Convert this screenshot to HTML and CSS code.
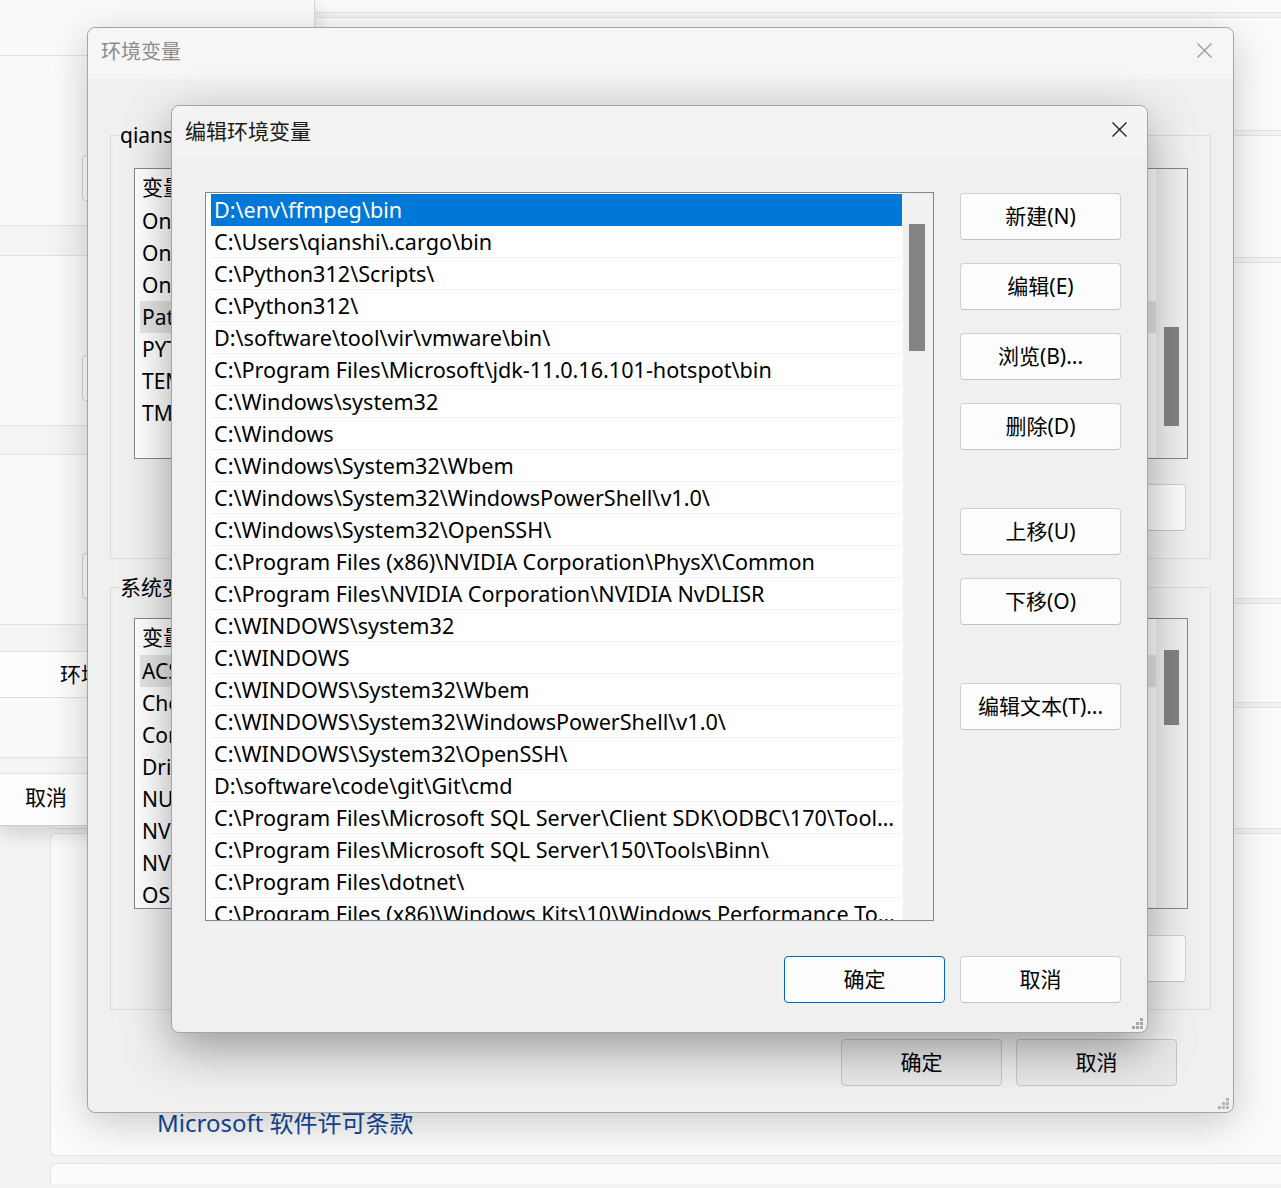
FILE: index.html
```html
<!DOCTYPE html>
<html lang="zh-CN">
<head>
    <meta charset="UTF-8">
    <title>编辑环境变量</title>
    <link rel="stylesheet" href="styles.css">
</head>
<body>
    <!-- settings page in the back -->
    <div class="settings">
        <div class="card c0"></div>
        <div class="card c1"></div>
        <div class="card c2"></div>
        <div class="card c3"></div>
        <div class="card c4"></div>
        <div class="card c5"></div>
        <div class="card c6"><a class="license" href="#">Microsoft 软件许可条款</a></div>
        <div class="card c7"></div>
    </div>

    <!-- system properties dialog -->
    <div class="sysprop">
        <div class="sp-row sp-top"></div>
        <div class="sp-row sp-block"><div class="sp-btn"></div></div>
        <div class="sp-row sp-strip"></div>
        <div class="sp-row sp-block"><div class="sp-btn"></div></div>
        <div class="sp-row sp-strip"></div>
        <div class="sp-row sp-block sp-block-b"><div class="sp-btn"></div></div>
        <div class="sp-row sp-strip2"></div>
        <div class="sp-row sp-env">环境变量(N)...</div>
        <div class="sp-row sp-gap"></div>
        <div class="sp-row sp-strip3"></div>
        <div class="sp-row sp-cancel">取消</div>
    </div>

    <!-- environment variables dialog (inactive) -->
    <div class="window outer">
        <div class="titlebar">
            <span>环境变量</span>
            <svg class="close" width="15" height="15" viewBox="0 0 15 15"><path d="M0.5 0.5L14.5 14.5M14.5 0.5L0.5 14.5" stroke="#9a9a9a" stroke-width="1.3" fill="none"/></svg>
        </div>
        <div class="outer-body">
            <fieldset class="group">
                <legend>qianshi 的用户变量(U)</legend>
                <div class="group-inner first">
                    <div class="listview">
                        <div class="lv-main">
                            <div class="lv-head">变量</div>
                            <div class="lv-row">OneDrive</div>
                            <div class="lv-row">OneDriveCommercial</div>
                            <div class="lv-row">OneDriveConsumer</div>
                            <div class="lv-row selected">Path</div>
                            <div class="lv-row">PYTHONPATH</div>
                            <div class="lv-row">TEMP</div>
                            <div class="lv-row">TMP</div>
                        </div>
                        <div class="vscroll"><div class="thumb t-user"></div></div>
                    </div>
                    <div class="btn-row">
                        <button class="btn">删除(D)</button>
                    </div>
                </div>
            </fieldset>

            <fieldset class="group second">
                <legend>系统变量(S)</legend>
                <div class="group-inner">
                    <div class="listview">
                        <div class="lv-main">
                            <div class="lv-head">变量</div>
                            <div class="lv-row selected">ACSvcPort</div>
                            <div class="lv-row">ChocolateyInstall</div>
                            <div class="lv-row">ComSpec</div>
                            <div class="lv-row">DriverData</div>
                            <div class="lv-row">NUMBER_OF_PROCESSORS</div>
                            <div class="lv-row">NVIDIA_APPS</div>
                            <div class="lv-row">NVTOOLSEXT_PATH</div>
                            <div class="lv-row">OS</div>
                        </div>
                        <div class="vscroll"><div class="thumb t-sys"></div></div>
                    </div>
                    <div class="btn-row">
                        <button class="btn">删除(L)</button>
                    </div>
                </div>
            </fieldset>

            <div class="btn-row footer">
                <button class="btn">确定</button>
                <button class="btn">取消</button>
            </div>
        </div>
        <svg class="grip grip-outer" width="12" height="12" viewBox="0 0 12 12"><g fill="#b4b4b4"><rect x="9" y="0" width="3" height="3"/><rect x="5" y="4" width="3" height="3"/><rect x="9" y="4" width="3" height="3"/><rect x="1" y="8" width="3" height="3"/><rect x="5" y="8" width="3" height="3"/><rect x="9" y="8" width="3" height="3"/></g></svg>
    </div>

    <!-- edit path dialog (active) -->
    <div class="window inner">
        <div class="titlebar">
            <span>编辑环境变量</span>
            <svg class="close" width="15" height="15" viewBox="0 0 15 15"><path d="M0.5 0.5L14.5 14.5M14.5 0.5L0.5 14.5" stroke="#1a1a1a" stroke-width="1.3" fill="none"/></svg>
        </div>
        <div class="inner-body">
            <div class="edit-area">
                <div class="listbox">
                    <div class="items">
                        <div class="item selected">D:\env\ffmpeg\bin</div>
                        <div class="item">C:\Users\qianshi\.cargo\bin</div>
                        <div class="item">C:\Python312\Scripts\</div>
                        <div class="item">C:\Python312\</div>
                        <div class="item">D:\software\tool\vir\vmware\bin\</div>
                        <div class="item">C:\Program Files\Microsoft\jdk-11.0.16.101-hotspot\bin</div>
                        <div class="item">C:\Windows\system32</div>
                        <div class="item">C:\Windows</div>
                        <div class="item">C:\Windows\System32\Wbem</div>
                        <div class="item">C:\Windows\System32\WindowsPowerShell\v1.0\</div>
                        <div class="item">C:\Windows\System32\OpenSSH\</div>
                        <div class="item">C:\Program Files (x86)\NVIDIA Corporation\PhysX\Common</div>
                        <div class="item">C:\Program Files\NVIDIA Corporation\NVIDIA NvDLISR</div>
                        <div class="item">C:\WINDOWS\system32</div>
                        <div class="item">C:\WINDOWS</div>
                        <div class="item">C:\WINDOWS\System32\Wbem</div>
                        <div class="item">C:\WINDOWS\System32\WindowsPowerShell\v1.0\</div>
                        <div class="item">C:\WINDOWS\System32\OpenSSH\</div>
                        <div class="item">D:\software\code\git\Git\cmd</div>
                        <div class="item">C:\Program Files\Microsoft SQL Server\Client SDK\ODBC\170\Tools\Binn\</div>
                        <div class="item">C:\Program Files\Microsoft SQL Server\150\Tools\Binn\</div>
                        <div class="item">C:\Program Files\dotnet\</div>
                        <div class="item">C:\Program Files (x86)\Windows Kits\10\Windows Performance Toolkit\</div>
                    </div>
                    <div class="vscroll list-scroll"><div class="thumb t-path"></div></div>
                </div>
                <div class="side-buttons">
                    <button class="btn">新建(N)</button>
                    <button class="btn">编辑(E)</button>
                    <button class="btn">浏览(B)...</button>
                    <button class="btn">删除(D)</button>
                    <button class="btn spaced">上移(U)</button>
                    <button class="btn">下移(O)</button>
                    <button class="btn spaced">编辑文本(T)...</button>
                </div>
            </div>
            <div class="btn-row inner-footer">
                <button class="btn default">确定</button>
                <button class="btn">取消</button>
            </div>
        </div>
        <svg class="grip grip-inner" width="12" height="12" viewBox="0 0 12 12"><g fill="#a6a6a6"><rect x="9" y="0" width="3" height="3"/><rect x="5" y="4" width="3" height="3"/><rect x="9" y="4" width="3" height="3"/><rect x="1" y="8" width="3" height="3"/><rect x="5" y="8" width="3" height="3"/><rect x="9" y="8" width="3" height="3"/></g></svg>
    </div>
</body>
</html>
```

FILE: styles.css
```css
* {
    box-sizing: border-box;
}
body {
    margin: 0;
    width: 1281px;
    height: 1188px;
    position: relative;
    overflow: hidden;
    background-color: #f3f3f3;
    font-family: "Noto Sans", "Noto Sans CJK SC", sans-serif;
    color: #000;
}

/* settings page */
.settings {
    position: absolute;
    left: 50px;
    top: 0;
    width: 1231px;
    display: flex;
    flex-direction: column;
    gap: 4px;
}
.card {
    background-color: #fbfbfb;
    border: 1px solid #e3e3e3;
    border-right: none;
    border-radius: 6px 0 0 6px;
}
.c0 { height: 13px; border-top: none; border-radius: 0 0 0 6px; }
.c1 { height: 114px; }
.c2 { height: 123px; }
.c3 { height: 337px; }
.c4 { height: 100px; }
.c5 { height: 122px; }
.c6 { height: 323px; padding: 273px 0 0 106px; }
.c7 { height: 21px; margin-top: 3px; border-bottom: none; border-radius: 6px 0 0 0; }
.license {
    font-size: 24px;
    line-height: 32px;
    color: #12479a;
    text-decoration: none;
}

/* system properties */
.sysprop {
    position: absolute;
    left: 0;
    top: 0;
    width: 315px;
    background-color: #fafafa;
    border-right: 1px solid #d6d6d6;
    border-bottom: 1px solid #cfcfcf;
    box-shadow: 0 6px 20px rgba(0,0,0,0.16);
    font-size: 21px;
}
.sp-row {
    border-bottom: 1px solid #e0e0e0;
}
.sp-top { height: 56px; }
.sp-block { height: 170px; padding: 99px 0 0 82px; }
.sp-block-b { padding-top: 98px; }
.sp-btn {
    width: 160px;
    height: 46px;
    border: 1px solid #d0d0d0;
    border-radius: 4px;
    background-color: #fdfdfd;
}
.sp-strip { height: 30px; background-color: #f4f4f4; }
.sp-strip + .sp-block + .sp-strip { height: 29px; }
.sp-strip2 { height: 27px; background-color: #f4f4f4; }
.sp-env {
    height: 46px;
    line-height: 44px;
    padding-left: 60px;
    background-color: #fdfdfd;
    white-space: nowrap;
}
.sp-gap { height: 60px; }
.sp-strip3 { height: 16px; background-color: #f4f4f4; }
.sp-cancel {
    height: 51px;
    line-height: 46px;
    padding-left: 25px;
    background-color: #fdfdfd;
    border-bottom: none;
}

/* windows */
.window {
    position: absolute;
    background-color: #f0f0f0;
    border: 1px solid #a4a4a4;
    border-radius: 8px;
}
.titlebar {
    height: 51px;
    display: flex;
    align-items: center;
    justify-content: space-between;
    padding: 0 20px 4px 13px;
    border-radius: 8px 8px 0 0;
    font-size: 20px;
}
.grip {
    position: absolute;
    right: 4px;
    bottom: 2px;
}
.btn {
    font-family: inherit;
    font-size: 21px;
    color: #000;
    width: 161px;
    height: 47px;
    padding: 0 0 4px;
    background-color: #fdfdfd;
    border: 1px solid #d0d0d0;
    border-bottom-color: #c4c4c4;
    border-radius: 4px;
}
.btn-row {
    display: flex;
    justify-content: flex-end;
}

.outer {
    left: 87px;
    top: 27px;
    width: 1147px;
    height: 1086px;
    box-shadow: 0 10px 40px rgba(0,0,0,0.2);
}
.outer .titlebar {
    background-color: #f6f6f6;
    color: #8c8c8c;
    padding-right: 21px;
    padding-bottom: 6px;
}
.outer-body {
    padding: 0 22px;
}
.group {
    margin: 42px 0 0;
    padding: 0;
    border: 1px solid #dcdcdc;
    min-width: 0;
}
.group.second {
    margin-top: 14px;
}
.group legend {
    font-size: 21px;
    line-height: 28px;
    margin-left: 8px;
    padding: 0 1px;
}
.group-inner {
    padding: 17px 22px 27px 23px;
}
.group-inner.first {
    padding-top: 19px;
}
.group .btn-row {
    margin: 25px 2px 0 0;
}
.group.second .btn-row {
    margin-top: 26px;
}
.listview {
    height: 291px;
    display: flex;
    background-color: #fff;
    border: 1px solid #828790;
    overflow: hidden;
    font-size: 21px;
}
.lv-main {
    flex: 1;
    overflow: hidden;
    white-space: nowrap;
}
.lv-head {
    height: 36px;
    line-height: 36px;
    padding-left: 7px;
}
.lv-row {
    height: 32px;
    line-height: 32px;
    margin-left: 5px;
    padding-left: 2px;
}
.lv-row.selected {
    background-color: #e5e5e5;
}
.vscroll {
    width: 31px;
    background-color: #f0f0f0;
}
.thumb {
    width: 15px;
    margin-left: 8px;
    background-color: #848484;
}
.t-user { margin-top: 158px; height: 99px; }
.t-sys { margin-top: 31px; height: 75px; }
.outer .footer {
    margin: 29px 34px 0 0;
    gap: 14px;
}
.outer .footer .btn {
    background-color: #e9e9e9;
    border-color: #c6c6c6;
}

/* edit dialog */
.inner {
    left: 171px;
    top: 105px;
    width: 977px;
    height: 928px;
    box-shadow: 0 16px 48px rgba(0,0,0,0.36);
}
.inner .titlebar {
    background-color: #f3f3f3;
    font-size: 21px;
    color: #1a1a1a;
}
.inner-body {
    padding: 35px 26px 0 33px;
}
.edit-area {
    display: flex;
    gap: 26px;
}
.listbox {
    width: 729px;
    height: 729px;
    display: flex;
    background-color: #fff;
    border: 1px solid #828790;
    overflow: hidden;
}
.items {
    flex: 1;
    min-width: 0;
    padding: 1px 1px 0 5px;
}
.item {
    height: 32px;
    line-height: 31px;
    padding-left: 3px;
    font-size: 21.6px;
    white-space: nowrap;
    overflow: hidden;
    text-overflow: ellipsis;
    border-bottom: 1px solid #efefef;
}
.item.selected {
    background-color: #0078d7;
    color: #fff;
    border-bottom-color: #0078d7;
}
.list-scroll {
    width: 30px;
}
.t-path {
    margin: 31px 0 0 6px;
    width: 16px;
    height: 127px;
}
.side-buttons {
    display: flex;
    flex-direction: column;
    gap: 23px;
    padding-top: 1px;
}
.side-buttons .spaced {
    margin-top: 35px;
}
.inner-footer {
    margin-top: 35px;
    gap: 15px;
}
.btn.default {
    border-color: #0067c0;
}
```
